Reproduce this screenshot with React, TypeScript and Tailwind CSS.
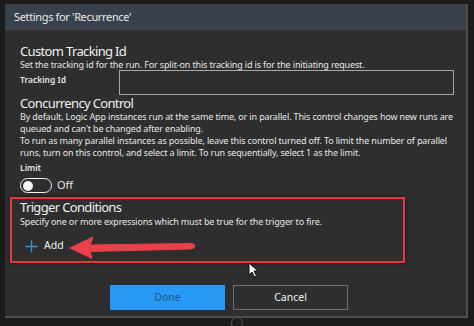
// Recreation of the Logic Apps "Settings for 'Recurrence'" dialog, with the
// red annotation box and arrow pointing at the "Add" trigger condition link.

const font = { fontFamily: '"Noto Sans", "Open Sans", sans-serif' };

function Heading({ children }: { children: React.ReactNode }) {
  return <div className="h-[15px] whitespace-nowrap text-[13px] leading-[15px] tracking-[-0.65px] text-[#f0f0f0]">{children}</div>;
}

function Line({ children }: { children: React.ReactNode }) {
  return <div className="h-[12px] whitespace-nowrap text-[9px] leading-[12px] tracking-[-0.15px] text-[#e6e6e6]">{children}</div>;
}

function Arrow() {
  return (
    <svg className="pointer-events-none absolute left-[54px] top-[35px]" width="132" height="26" viewBox="0 0 132 26">
      <path
        d="M4 14 L27 3 L24 11 L124 9.5 Q129 9.5 129 12 Q129 14.5 124 15 L24 17.5 L26 24.5 Z"
        fill="#ea4149"
        stroke="#ea4149"
        strokeWidth="1"
        strokeLinejoin="round"
      />
    </svg>
  );
}

function Cursor() {
  return (
    <svg className="pointer-events-none absolute left-[248px] top-[262px]" width="11" height="16" viewBox="0 0 11 16">
      <path d="M1 1 L1 13 L4 10 L6.5 15 L8.5 14 L6 9 L10 9 Z" fill="#ffffff" stroke="#111111" strokeWidth="1" strokeLinejoin="round" />
    </svg>
  );
}

export default function App() {
  return (
    <div className="relative h-[326px] w-[474px] overflow-hidden bg-[#1c1c1c] pl-[5px] pt-[4px]" style={font}>
      <div className="flex h-[314px] w-[463px] flex-col border-b-2 border-r-2 border-[#4d4d4d] bg-[#2e2e2e]">
        <div className="flex h-[26px] shrink-0 items-center bg-[#39424c] pl-[9px] text-[11px] tracking-[-0.35px] text-[#e8e8e8]">
          Settings for 'Recurrence'
        </div>

        <div className="flex flex-col pl-[15px] pt-[14px]">
          <Heading>Custom Tracking Id</Heading>
          <div className="h-[11px] whitespace-nowrap text-[9px] leading-[11px] tracking-[-0.15px] text-[#e6e6e6]">
            Set the tracking id for the run. For split-on this tracking id is for the initiating request.
          </div>
          <div className="flex h-[25px] items-start">
            <div className="w-[99px] pt-[4px] text-[8.5px] font-semibold leading-[12px] text-[#e6e6e6]">Tracking Id</div>
            <div className="h-[25px] w-[335px] border border-[#a8a8a8] bg-[#2e2e2e]" />
          </div>

          <div className="mt-px">
            <Heading>Concurrency Control</Heading>
          </div>
          <div className="flex flex-col">
            <Line>By default, Logic App instances run at the same time, or in parallel. This control changes how new runs are</Line>
            <Line>queued and can't be changed after enabling.</Line>
            <Line>To run as many parallel instances as possible, leave this control turned off. To limit the number of parallel</Line>
            <Line>runs, turn on this control, and select a limit. To run sequentially, select 1 as the limit.</Line>
          </div>
          <div className="mt-[3px] text-[8.5px] font-semibold leading-[12px] text-[#e6e6e6]">Limit</div>
          <div className="mt-[4px] flex h-[15px] items-center gap-[5px]">
            <div className="flex h-[15px] w-[32px] items-center rounded-full border-[1.5px] border-[#f2f2f2] pl-[2px]">
              <div className="h-[10px] w-[10px] rounded-full bg-[#f2f2f2]" />
            </div>
            <span className="text-[11px] text-[#e6e6e6]">Off</span>
          </div>

          <div className="relative -ml-[10px] mt-[4px] w-[395px] border-2 border-[#e23b3f] pb-[5px] pl-[8px] pt-px shadow-[0_0_3px_rgba(0,0,0,0.7)]">
            <Heading>Trigger Conditions</Heading>
            <div className="mt-px">
              <Line>Specify one or more expressions which must be true for the trigger to fire.</Line>
            </div>
            <div className="mt-[8px] flex h-[20px] items-center gap-[6px] pl-[5px]">
              <svg width="13" height="13" viewBox="0 0 13 13">
                <path d="M6.5 0.5 V12.5 M0.5 6.5 H12.5" stroke="#3b91dc" strokeWidth="1.4" />
              </svg>
              <span className="text-[10.5px] text-[#f0f0f0]">Add</span>
            </div>
            <Arrow />
          </div>

          <div className="mt-[22px] flex gap-[8px] pl-[90px]">
            <div className="flex h-[25px] w-[115px] items-center justify-center bg-[#2899f5] text-[10.5px] text-[#1a5a8e]">Done</div>
            <div className="flex h-[25px] w-[115px] items-center justify-center border border-[#6e6e6e] text-[10.5px] text-[#f0f0f0]">
              Cancel
            </div>
          </div>
        </div>
      </div>
      <Cursor />
      <div className="absolute left-[231px] top-[317px] h-[12px] w-[12px] rounded-full border border-[#555]" />
    </div>
  );
}
